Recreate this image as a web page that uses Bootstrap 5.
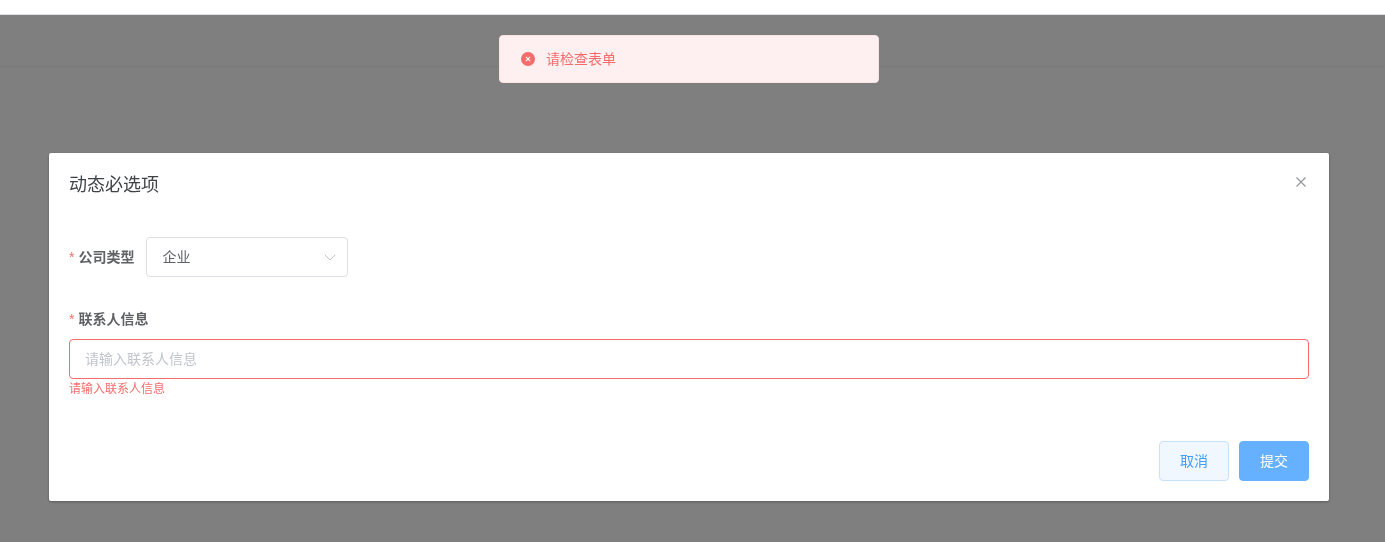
<!DOCTYPE html>
<html lang="zh-CN">
<head>
<meta charset="utf-8">
<title>动态必选项</title>
<link href="https://cdn.jsdelivr.net/npm/bootstrap@5.3.0/dist/css/bootstrap.min.css" rel="stylesheet">
<style>
html,body{height:100%;}
body{margin:0;overflow:hidden;background:#fff;font-family:"Liberation Sans","Noto Sans CJK SC",sans-serif;font-size:14px;color:#606266;}
.top-strip{height:15px;background:#fff;border-bottom:1px solid #dcdfe6;}
.sub-strip{height:52px;border-bottom:1px solid #f2f2f2;}
.dim-layer{position:fixed;top:15px;left:0;right:0;bottom:0;background:rgba(0,0,0,.5);}
.dim-inner{padding:138px 56px 0 49px;}
.dialog-box{background:#fff;border-radius:2px;box-shadow:0 1px 3px rgba(0,0,0,.3);height:348px;width:1280px;padding:20px;}
.dialog-title{font-size:18px;line-height:24px;color:#3f4246;}
.dialog-x{position:absolute;top:24px;right:23px;width:10px;height:10px;display:block;color:#909399;}
.dialog-pos{position:relative;}
.form-one{margin-top:40px;height:40px;}
.lbl{font-weight:700;color:#606266;line-height:40px;padding-right:12px;}
.req{color:#f56c6c;font-weight:400;margin-right:4px;}
.fake-select{width:202px;height:40px;border:1px solid #dcdfe6;border-radius:4px;padding:0 11px 0 15px;line-height:38px;color:#606266;}
.form-two{margin-top:22px;}
.lbl-top{line-height:40px;font-weight:700;color:#606266;}
.text-field{display:block;width:100%;height:40px;border:1px solid #f56c6c;border-radius:4px;padding:0 15px;font-size:14px;color:#606266;outline:0;font-family:inherit;background:#fff;}
.text-field::placeholder{color:#c0c4cc;opacity:1;}
.err-msg{color:#f56c6c;font-size:12px;line-height:12px;padding-top:4px;}
.dialog-foot{margin-top:46px;gap:10px;}
.act-btn{width:70px;height:40px;border-radius:4px;font-size:14px;line-height:1;padding:0;font-family:inherit;}
.act-plain{background:#f0f7ff;border:1px solid #c6e2ff;color:#409eff;}
.act-solid{background:#66b1ff;border:1px solid #66b1ff;color:#fff;}
.toast-box{position:fixed;top:35px;left:499px;width:380px;height:48px;background:#fef0f0;border:1px solid #fde2e2;border-radius:4px;padding:0 20px;color:#f56c6c;z-index:5;}
.toast-ico{width:16px;height:16px;margin-right:10px;flex:none;}
</style>
</head>
<body>
<div class="top-strip"></div>
<div class="sub-strip"></div>
<div class="dim-layer">
  <div class="dim-inner">
    <div class="dialog-box dialog-pos">
      <div class="dialog-title">动态必选项</div>
      <svg class="dialog-x" viewBox="0 0 10 10" fill="none" stroke="currentColor" stroke-width="1.1"><path d="M.5.5l9 9M9.5.5l-9 9"/></svg>
      <div class="form-one d-flex">
        <div class="lbl"><span class="req">*</span>公司类型</div>
        <div class="fake-select d-flex align-items-center justify-content-between">
          <span>企业</span>
          <svg width="12" height="7" viewBox="0 0 12 7" fill="none" stroke="#c0c4cc" stroke-width="1"><path d="M.7.7L6 6l5.3-5.3"/></svg>
        </div>
      </div>
      <div class="form-two">
        <div class="lbl-top"><span class="req">*</span>联系人信息</div>
        <input class="text-field" type="text" placeholder="请输入联系人信息">
        <div class="err-msg">请输入联系人信息</div>
      </div>
      <div class="dialog-foot d-flex justify-content-end">
        <button type="button" class="btn act-btn act-plain">取消</button>
        <button type="button" class="btn act-btn act-solid">提交</button>
      </div>
    </div>
  </div>
</div>
<div class="toast-box d-flex align-items-center">
  <svg class="toast-ico" viewBox="0 0 16 16"><circle cx="8" cy="8" r="7" fill="#f56c6c"/><path d="M5.9 5.9l4.2 4.2M10.1 5.9l-4.2 4.2" stroke="#fff" stroke-width="1.1"/></svg>
  <span>请检查表单</span>
</div>
<script src="https://cdn.jsdelivr.net/npm/bootstrap@5.3.0/dist/js/bootstrap.bundle.min.js"></script>
</body>
</html>
